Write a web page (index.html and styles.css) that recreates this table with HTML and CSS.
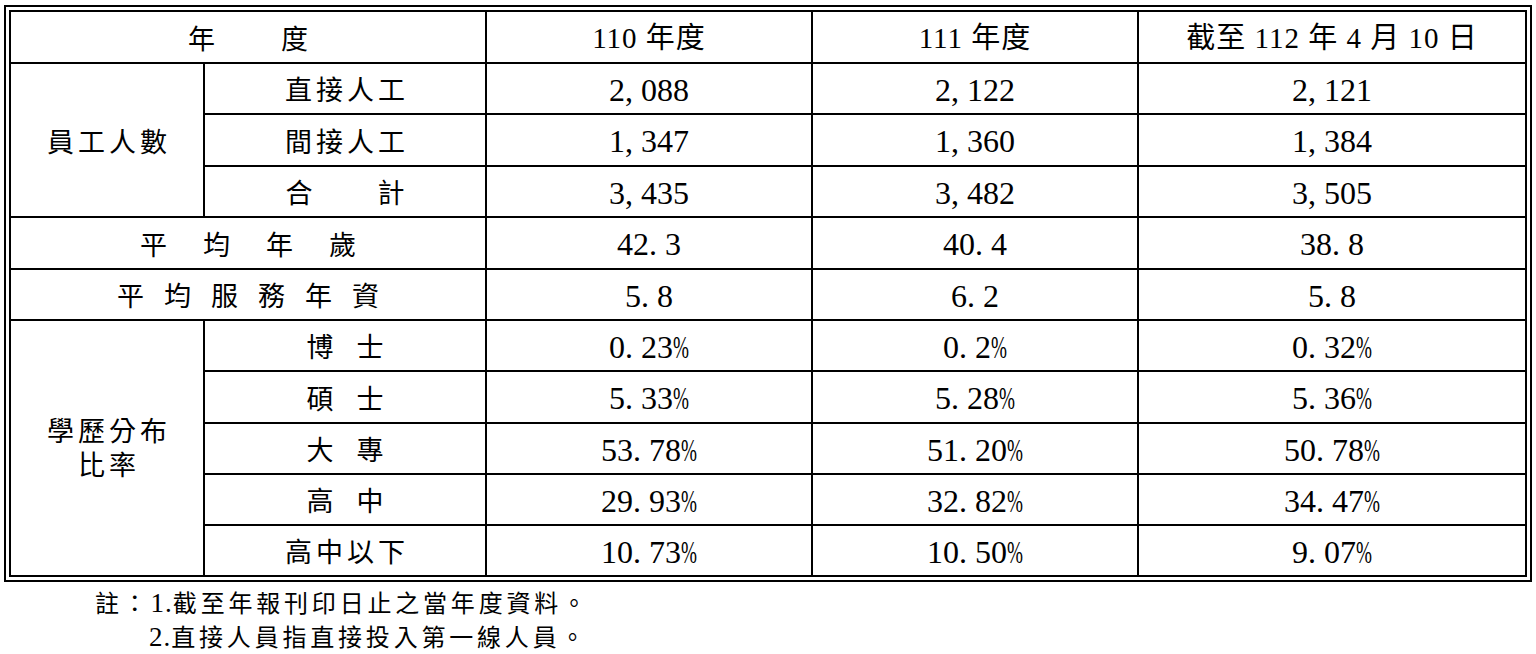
FILE: index.html
```html
<!DOCTYPE html>
<html lang="zh-Hant">
<head>
<meta charset="utf-8">
<title>員工資料</title>
<link rel="stylesheet" href="styles.css">
</head>
<body>
<div class="frame">
  <div class="grid">
    <div class="cell span2 lbl s-nian">年度</div>
    <div class="cell hd">110 年度</div>
    <div class="cell hd">111 年度</div>
    <div class="cell hd">截至 112 年 4 月 10 日</div>

    <div class="cell rows3 lbl">員工人數</div>
    <div class="cell lbl">直接人工</div>
    <div class="cell num">2<span class="h">,</span>088</div>
    <div class="cell num">2<span class="h">,</span>122</div>
    <div class="cell num">2<span class="h">,</span>121</div>

    <div class="cell lbl">間接人工</div>
    <div class="cell num">1<span class="h">,</span>347</div>
    <div class="cell num">1<span class="h">,</span>360</div>
    <div class="cell num">1<span class="h">,</span>384</div>

    <div class="cell lbl s-he">合計</div>
    <div class="cell num">3<span class="h">,</span>435</div>
    <div class="cell num">3<span class="h">,</span>482</div>
    <div class="cell num">3<span class="h">,</span>505</div>

    <div class="cell span2 lbl s-age">平均年歲</div>
    <div class="cell num">42<span class="h">.</span>3</div>
    <div class="cell num">40<span class="h">.</span>4</div>
    <div class="cell num">38<span class="h">.</span>8</div>

    <div class="cell span2 lbl s-svc">平均服務年資</div>
    <div class="cell num">5<span class="h">.</span>8</div>
    <div class="cell num">6<span class="h">.</span>2</div>
    <div class="cell num">5<span class="h">.</span>8</div>

    <div class="cell rows5 lbl stack"><span class="ln">學歷分布</span><span class="ln">比率</span></div>
    <div class="cell lbl s-two">博士</div>
    <div class="cell num">0<span class="h">.</span>23<span class="pc">%</span></div>
    <div class="cell num">0<span class="h">.</span>2<span class="pc">%</span></div>
    <div class="cell num">0<span class="h">.</span>32<span class="pc">%</span></div>

    <div class="cell lbl s-two">碩士</div>
    <div class="cell num">5<span class="h">.</span>33<span class="pc">%</span></div>
    <div class="cell num">5<span class="h">.</span>28<span class="pc">%</span></div>
    <div class="cell num">5<span class="h">.</span>36<span class="pc">%</span></div>

    <div class="cell lbl s-two">大專</div>
    <div class="cell num">53<span class="h">.</span>78<span class="pc">%</span></div>
    <div class="cell num">51<span class="h">.</span>20<span class="pc">%</span></div>
    <div class="cell num">50<span class="h">.</span>78<span class="pc">%</span></div>

    <div class="cell lbl s-two">高中</div>
    <div class="cell num">29<span class="h">.</span>93<span class="pc">%</span></div>
    <div class="cell num">32<span class="h">.</span>82<span class="pc">%</span></div>
    <div class="cell num">34<span class="h">.</span>47<span class="pc">%</span></div>

    <div class="cell lbl">高中以下</div>
    <div class="cell num">10<span class="h">.</span>73<span class="pc">%</span></div>
    <div class="cell num">10<span class="h">.</span>50<span class="pc">%</span></div>
    <div class="cell num">9<span class="h">.</span>07<span class="pc">%</span></div>
  </div>
</div>
<div class="notes">
  <p class="note">註：<span class="nd">1.</span>截至年報刊印日止之當年度資料。</p>
  <p class="note indent"><span class="nd">2.</span>直接人員指直接投入第一線人員。</p>
</div>
</body>
</html>
```
FILE: styles.css
```css
html, body {
  margin: 0;
  padding: 0;
  background: #fff;
  color: #000;
}

body {
  font-family: "Liberation Serif", "Noto Sans CJK TC", serif;
}

.frame {
  display: inline-block;
  margin: 5px 0 0 4px;
  border: 2px solid #000;
  padding: 3px;
}

.grid {
  display: grid;
  grid-template-columns: 192px 280px 324px 324px 386px;
  grid-template-rows: 50px 49px 50px 49px 50px 49px 49px 50px 49px 49px 49px;
  gap: 2px;
  padding: 2px;
  background: #000;
}

.cell {
  background: #fff;
  display: flex;
  align-items: center;
  justify-content: center;
  line-height: 1;
  white-space: nowrap;
}

.span2 { grid-column: span 2; }
.rows3 { grid-row: span 3; }
.rows5 { grid-row: span 5; }

.lbl {
  font-family: "Noto Sans CJK TC", "Liberation Serif", sans-serif;
  font-size: 27px;
  letter-spacing: 4px;
  padding-left: 4px;
}

.s-nian { letter-spacing: 66px; padding-left: 66px; }
.s-he { letter-spacing: 65px; padding-left: 65px; }
.s-age { letter-spacing: 36px; padding-left: 36px; }
.s-svc { letter-spacing: 20px; padding-left: 20px; }
.s-two { letter-spacing: 23px; padding-left: 23px; }

.stack {
  flex-direction: column;
  padding-top: 2px;
}

.ln {
  display: block;
  font-family: "Liberation Serif", "Noto Sans CJK TC", serif;
  line-height: 34px;
}

.hd {
  font-size: 29px;
  letter-spacing: 1px;
  padding-top: 2px;
}

.num {
  font-size: 32px;
  padding-top: 2px;
}

.h {
  display: inline-block;
  width: 0.5em;
  text-align: left;
}

.pc {
  display: inline-block;
  width: 0.5em;
  transform: scaleX(0.6);
  transform-origin: left center;
}

.notes {
  margin: 5px 0 0 95px;
}

.note {
  margin: 0;
  font-size: 24px;
  line-height: 33px;
  letter-spacing: 3.8px;
}

.nd {
  font-size: 27px;
  letter-spacing: 1px;
}

.indent {
  padding-left: 54px;
}
```
